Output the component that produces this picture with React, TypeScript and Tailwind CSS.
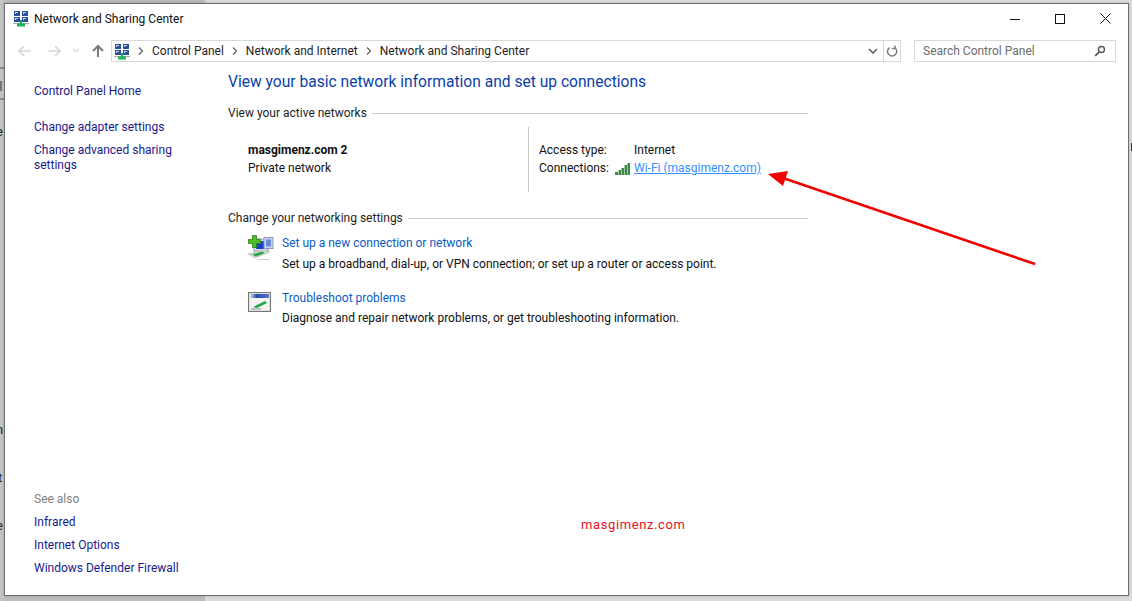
const font = 'font-["Roboto",sans-serif]'

function NetworkIcon({ className }: { className?: string }) {
  return (
    <svg width="16" height="17" viewBox="0 0 16 17" className={className}>
      <rect x="1" y="1" width="6" height="5" fill="#2a4f9c" />
      <rect x="9" y="1" width="6" height="5" fill="#2a4f9c" />
      <rect x="1" y="7" width="6" height="5" fill="#2a4f9c" />
      <rect x="9" y="7" width="6" height="5" fill="#2a4f9c" />
      <path d="M2 2h3v1H3v1H2zM10 2h3v1h-2v1h-1zM2 8h3v1H3v1H2zM10 8h3v1h-2v1h-1z" fill="#c3d3f2" />
      <rect x="0" y="13" width="16" height="1" fill="#a8a8a8" />
      <rect x="7" y="10" width="2" height="4" fill="#1fa85a" />
      <rect x="4" y="13.5" width="8" height="3" fill="#1fb45f" />
    </svg>
  )
}

function Crumb({ label }: { label: string }) {
  return (
    <>
      <svg width="6" height="8" viewBox="0 0 6 8" className="mx-[8px] shrink-0">
        <path d="M1 .5 4.5 4 1 7.5" fill="none" stroke="#666" strokeWidth="1.3" />
      </svg>
      <span>{label}</span>
    </>
  )
}

function SideLink({ children }: { children: React.ReactNode }) {
  return <a className="block text-[#1a1a8c] leading-[15px]">{children}</a>
}

function SectionHeading({ label }: { label: string }) {
  return (
    <div className="flex items-center gap-[5px] text-[#1e1e1e]">
      <span>{label}</span>
      <div className="h-px flex-1 bg-[#c8c8c8]" />
    </div>
  )
}

function AddConnectionIcon() {
  return (
    <svg width="28" height="28" viewBox="0 0 28 28">
      <rect x="7" y="4" width="14" height="12" fill="#dfe6f2" stroke="#8c9ab5" />
      <rect x="9" y="6" width="10" height="8" fill="#1f3fd0" />
      <rect x="17" y="2.5" width="9" height="11" fill="#c9d6ea" stroke="#8c9ab5" />
      <rect x="19" y="4.5" width="5" height="7" fill="#6a8ae0" />
      <path d="M1.5 4.500h4v-4h4v4h4v4h-4v4h-4v-4h-4z" fill="#4cc02a" stroke="#2f7d18" strokeWidth=".8" />
      <path d="M1 19 16 15l7 2-15 6z" fill="#dcdcdc" stroke="#b0b0b0" strokeWidth=".6" />
      <path d="M5 19.500 15 16.500l3 1.500-9 3.500z" fill="#22a84a" />
      <path d="M10 24.500h12" stroke="#cfcfcf" strokeWidth="1" />
    </svg>
  )
}

function TroubleshootIcon() {
  return (
    <svg width="28" height="28" viewBox="0 4 28 28">
      <defs>
        <linearGradient id="troubleTitle" x1="0" x2="1" y1="0" y2="0">
          <stop offset="0" stopColor="#dfe3ee" />
          <stop offset=".35" stopColor="#2a48b0" />
          <stop offset="1" stopColor="#5f78cc" />
        </linearGradient>
      </defs>
      <rect x=".5" y="6.500" width="22" height="19" fill="#dedede" stroke="#777" />
      <rect x="2" y="8" width="19" height="4" fill="url(#troubleTitle)" />
      <rect x="2" y="12" width="19" height="12" fill="#f4f4f4" />
      <path d="M5 21 17 15l2 2-10 5z" fill="#1fa84a" />
      <path d="M3 23h10" stroke="#8a8a8a" />
    </svg>
  )
}

export default function App() {
  return (
    <div className={`${font} relative flex h-[601px] w-[1132px] overflow-hidden bg-[#dcdcdc] pb-[5px] pl-[4px] pr-[3px] pt-[3px] text-[12px]`}>
      {/* what shows of the desktop behind the window */}
      <div className="absolute bottom-0 left-0 h-[6px] w-[205px] bg-[#bdbdbd]" />
      <div className="absolute left-0 top-0 h-[3px] w-[205px] bg-[#bdbdbd]" />
      <div className="absolute left-0 top-0 h-full w-[4px] bg-[#c4c4c4]" />
      <div className="absolute left-0 top-[67px] h-[2px] w-[4px] bg-[#8a8a8a]" />
      <div className="absolute left-0 top-[81px] h-[10px] w-[2px] bg-[#777]" />
      <div className="absolute left-0 top-[98px] h-[2px] w-[4px] bg-[#8a8a8a]" />
      <div className="absolute right-0 top-[143px] h-[8px] w-[1px] bg-[#333]" />
      <div className="absolute left-[-4px] top-[122px] text-[13px] text-[#222]">e</div>
      <div className="absolute left-[-4px] top-[420px] text-[13px] text-[#222]">n</div>
      <div className="absolute left-[-2px] top-[468px] text-[13px] text-[#222]">t</div>
      <div className="absolute left-[-4px] top-[516px] text-[13px] text-[#222]">e</div>

      <div className="relative flex min-w-0 flex-1 flex-col border border-[#6e6e6e] bg-white shadow-[0_0_3px_rgba(0,0,0,0.2)]">
        {/* title bar */}
        <div className="flex h-[29px] items-center pl-[8px] text-[#111]">
          <NetworkIcon className="mr-[5px]" />
          <span className="flex-1">Network and Sharing Center</span>
          <div className="flex items-center text-black">
            <div className="flex w-[45px] justify-center">
              <svg width="10" height="10" viewBox="0 0 10 10"><path d="M0 5.500h10" stroke="#111" /></svg>
            </div>
            <div className="flex w-[46px] justify-center">
              <svg width="10" height="10" viewBox="0 0 10 10"><rect x=".5" y=".5" width="9" height="9" fill="none" stroke="#111" /></svg>
            </div>
            <div className="flex w-[45px] justify-center">
              <svg width="11" height="11" viewBox="0 0 11 11"><path d="M.5.5l10 10M10.500.5l-10 10" stroke="#111" /></svg>
            </div>
          </div>
        </div>

        {/* address row */}
        <div className="mt-[7px] flex h-[22px] items-center pl-[12px] pr-[11px]">
          <svg width="16" height="14" viewBox="0 0 16 14" className="mr-[13px]"><path d="M14 7H2M7 2 2 7l5 5" fill="none" stroke="#d6d6d6" strokeWidth="1.7" /></svg>
          <svg width="16" height="14" viewBox="0 0 16 14" className="mr-[10px]"><path d="M2 7h12M9 2l5 5-5 5" fill="none" stroke="#d6d6d6" strokeWidth="1.7" /></svg>
          <svg width="8" height="6" viewBox="0 0 8 6" className="mr-[11px]"><path d="M1 1l3 3 3-3" fill="none" stroke="#d6d6d6" strokeWidth="1.2" /></svg>
          <svg width="14" height="14" viewBox="0 0 14 14" className="mr-[6px]"><path d="M7 13V2M2 7l5-5 5 5" fill="none" stroke="#7b7b7b" strokeWidth="2" /></svg>
          <div className="flex h-[22px] w-[790px] items-center border border-[#d9d9d9] pl-[2px] text-[#1e1e1e]">
            <NetworkIcon />
            <Crumb label="Control Panel" />
            <Crumb label="Network and Internet" />
            <Crumb label="Network and Sharing Center" />
            <div className="flex-1" />
            <svg width="10" height="7" viewBox="0 0 10 7" className="mr-[5px]"><path d="M1 1l4 4 4-4" fill="none" stroke="#666" strokeWidth="1.7" /></svg>
            <div className="flex h-full w-[17px] items-center justify-center border-l border-[#d9d9d9]">
              <svg width="12" height="13" viewBox="0 0 12 13"><path d="M3 2.800a4.600 4.600 0 1 0 5.500-.2M3 .5v3h3" fill="none" stroke="#777" strokeWidth="1.4" transform="matrix(-1 0 0 1 12 0)" /></svg>
            </div>
          </div>
          <div className="ml-[13px] flex h-[22px] w-[202px] items-center justify-between border border-[#d9d9d9] pl-[8px] pr-[9px] text-[#6d6d6d]">
            <span>Search Control Panel</span>
            <svg width="12" height="12" viewBox="0 0 12 12"><circle cx="7.500" cy="4.500" r="3" fill="none" stroke="#555" strokeWidth="1.4" /><path d="M5.200 6.800 1.200 10.800" stroke="#555" strokeWidth="1.8" /></svg>
          </div>
        </div>

        {/* content */}
        <div className="flex min-h-0 flex-1">
          <aside className="flex w-[223px] shrink-0 flex-col pl-[29px] pr-[24px] pb-[19px] pt-[22px]">
            <SideLink>Control Panel Home</SideLink>
            <div className="mt-[21px]"><SideLink>Change adapter settings</SideLink></div>
            <div className="mt-[8px]"><SideLink>Change advanced sharing settings</SideLink></div>
            <div className="mt-auto text-[#7f7f7f] leading-[15px]">See also</div>
            <div className="mt-[8px]"><SideLink>Infrared</SideLink></div>
            <div className="mt-[8px]"><SideLink>Internet Options</SideLink></div>
            <div className="mt-[8px]"><SideLink>Windows Defender Firewall</SideLink></div>
          </aside>

          <main className="relative w-[580px] pt-[9px]">
            <h1 className="text-[15.6px] leading-[22px] text-[#0b3fa8]">View your basic network information and set up connections</h1>
            <div className="mt-[12px] leading-[16px]"><SectionHeading label="View your active networks" /></div>

            <div className="mt-[6px] flex h-[65px] leading-[16px]">
              <div className="w-[301px] border-r border-[#c8c8c8] pl-[20px] pt-[15px] text-[#111]">
                <div className="font-bold">masgimenz.com 2</div>
                <div className="mt-[2px]">Private network</div>
              </div>
              <div className="pl-[10px] pt-[15px] text-[#111]">
                <div className="flex">
                  <span className="w-[95px]">Access type:</span>
                  <span>Internet</span>
                </div>
                <div className="mt-[2px] flex items-center">
                  <span className="w-[76px]">Connections:</span>
                  <svg width="16" height="13" viewBox="0 0 16 13" className="mr-[3px]">
                    <path d="M0 10h3v3H0zM3.500 8h2.500v5H3.500zM6.500 6h2.500v7H6.500zM9.500 3h2.500v10H9.500zM12.500 1H15v12h-2.500z" fill="#3f8a4a" />
                  </svg>
                  <a className="text-[#3390ff] underline">Wi-Fi (masgimenz.com)</a>
                </div>
              </div>
            </div>

            <div className="mt-[18px] leading-[16px]"><SectionHeading label="Change your networking settings" /></div>

            <div className="mt-[9px] flex items-start pl-[18px] leading-[16px]">
              <div className="ml-[1px] w-[35px] shrink-0"><AddConnectionIcon /></div>
              <div>
                <a className="text-[#0b5cc4]">Set up a new connection or network</a>
                <p className="mt-[5px] text-[#111]">Set up a broadband, dial-up, or VPN connection; or set up a router or access point.</p>
              </div>
            </div>

            <div className="mt-[18px] flex items-start pl-[18px] leading-[16px]">
              <div className="ml-[2px] w-[34px] shrink-0"><TroubleshootIcon /></div>
              <div>
                <a className="text-[#0b5cc4]">Troubleshoot problems</a>
                <p className="mt-[4px] text-[#111]">Diagnose and repair network problems, or get troubleshooting information.</p>
              </div>
            </div>
          </main>
        </div>

        {/* annotations pasted over the screenshot */}
        <svg width="280" height="110" viewBox="0 0 280 110" className="absolute left-[760px] top-[165px]">
          <path d="M270 95 18 9" stroke="#f00000" strokeWidth="2.6" />
          <path d="M3 5 23 2 18 17z" fill="#f00000" />
        </svg>
        <span className="absolute left-[576px] top-[511px] text-[13px] tracking-[0.6px] text-[#e8101c]">masgimenz.com</span>
      </div>
    </div>
  )
}
